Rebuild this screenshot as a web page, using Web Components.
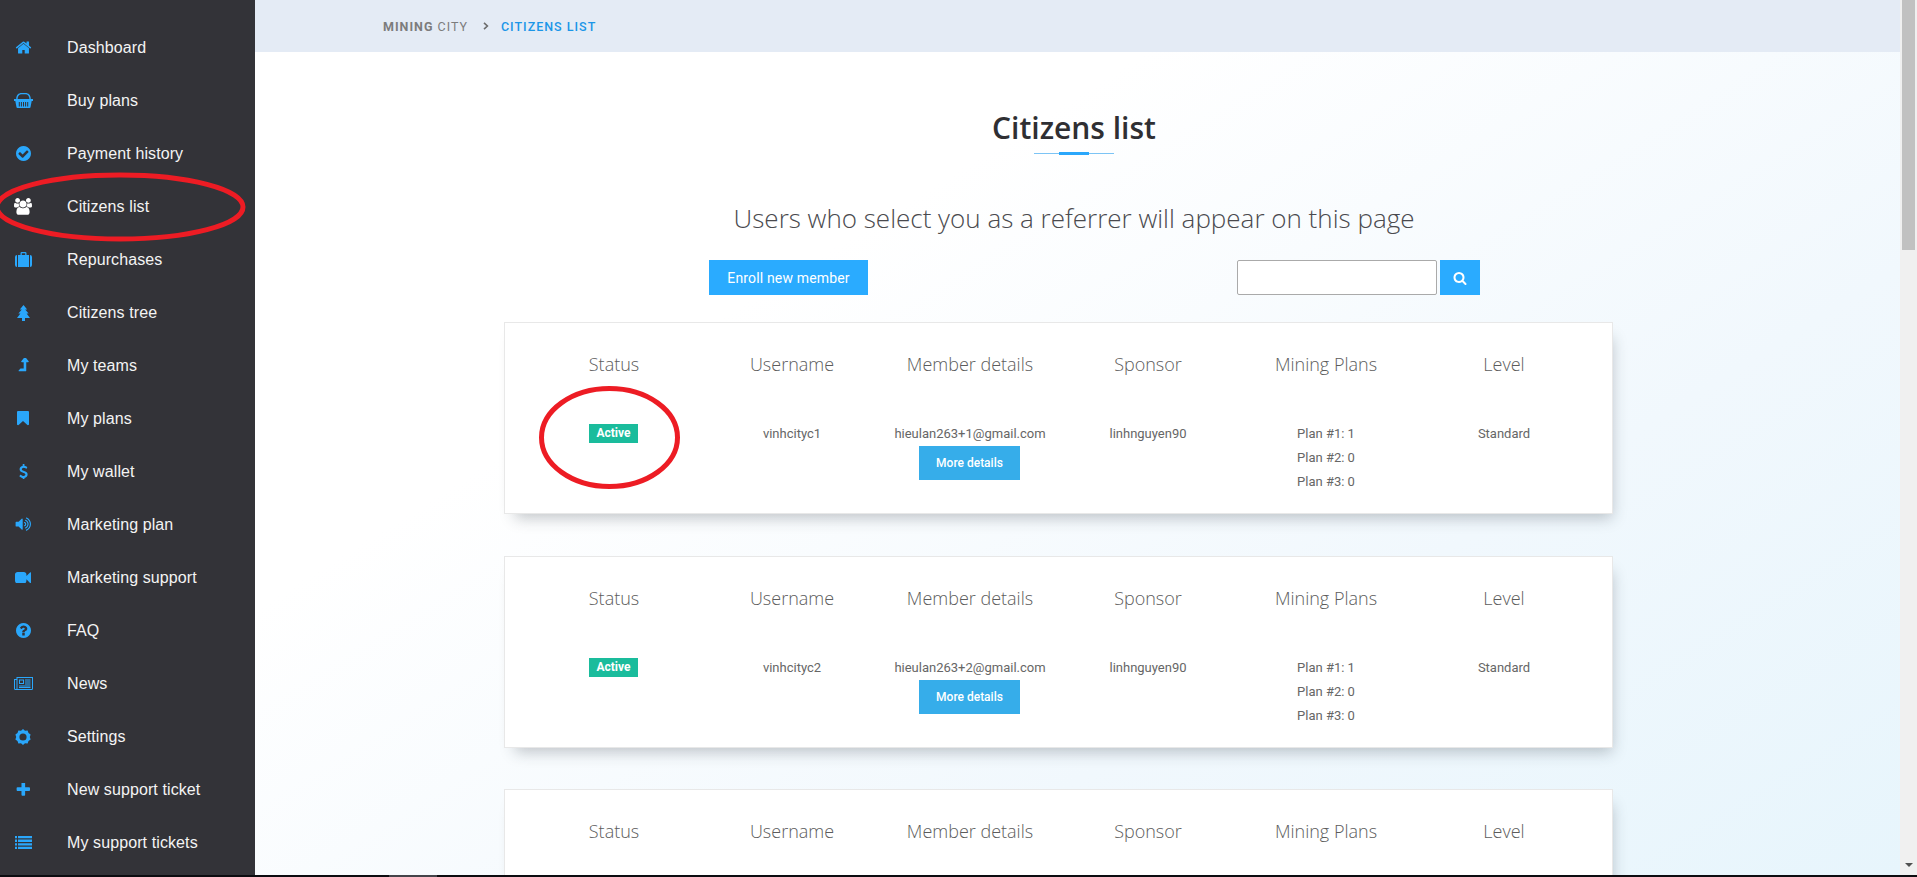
<!DOCTYPE html>
<html lang="en">
<head>
<meta charset="utf-8">
<title>Citizens list</title>
<style>
    html, body { margin: 0; height: 100%; overflow: hidden; background: #000; }
</style>
</head>
<body>
<app-shell>
    <side-nav slot="nav">
        <nav-item icon="home" w="17">Dashboard</nav-item>
        <nav-item icon="basket" w="19">Buy plans</nav-item>
        <nav-item icon="check" w="15">Payment history</nav-item>
        <nav-item icon="users" w="18" white>Citizens list</nav-item>
        <nav-item icon="suitcase" w="17">Repurchases</nav-item>
        <nav-item icon="tree" w="13">Citizens tree</nav-item>
        <nav-item icon="levelup" w="11">My teams</nav-item>
        <nav-item icon="bookmark" w="12">My plans</nav-item>
        <nav-item icon="dollar" w="9">My wallet</nav-item>
        <nav-item icon="volume" w="16">Marketing plan</nav-item>
        <nav-item icon="video" w="16">Marketing support</nav-item>
        <nav-item icon="question" w="15">FAQ</nav-item>
        <nav-item icon="news" w="19">News</nav-item>
        <nav-item icon="gear" w="16">Settings</nav-item>
        <nav-item icon="plus" w="14">New support ticket</nav-item>
        <nav-item icon="list" w="17">My support tickets</nav-item>
    </side-nav>

    <crumb-bar slot="top"></crumb-bar>
    <page-head></page-head>
    <search-row></search-row>
    <citizen-card username="vinhcityc1" email="hieulan263+1@gmail.com" sponsor="linhnguyen90" plans="1,0,0"></citizen-card>
    <citizen-card username="vinhcityc2" email="hieulan263+2@gmail.com" sponsor="linhnguyen90" plans="1,0,0"></citizen-card>
    <citizen-card username="vinhcityc3" email="hieulan263+3@gmail.com" sponsor="linhnguyen90" plans="1,0,0"></citizen-card>

    <ring-mark slot="marks" cx="120" cy="207" rx="123" ry="32"></ring-mark>
    <ring-mark slot="marks" cx="609.5" cy="437.5" rx="68" ry="49"></ring-mark>
</app-shell>

<script>
const ICONS = {
    home: ['0 0 1792 1792', '<path d="M1472 992v480q0 26-19 45t-45 19h-384v-384h-256v384h-384q-26 0-45-19t-19-45v-480q0-1 .5-3t.5-3l575-474 575 474q1 2 1 6zm223-69l-62 74q-8 9-21 11h-3q-13 0-21-7l-692-577-692 577q-12 8-24 7-13-2-21-11l-62-74q-8-10-7-23.5t11-21.5l719-599q32-26 76-26t76 26l244 204v-195q0-14 9-23t23-9h192q14 0 23 9t9 23v408l219 182q10 8 11 21.5t-7 23.5z"/>'],
    basket: ['0 0 19 15', '<path d="M0 6h19v2h-1.300L16.500 14.200a1 1 0 0 1-1 .8h-12a1 1 0 0 1-1-.8L1.300 8H0z"/><path d="M2.200 6C2.200 2 4.500 0 7.500 0h4c3 0 5.300 2 5.300 6h-1.400C15.400 3 13.700 1.300 11.500 1.300h-4C5.300 1.300 3.600 3 3.600 6z"/><path fill="#333338" d="M4.800 9h1v4.500h-1zM6.900 9h1v4.500h-1zM9 9h1v4.500H9zM11.100 9h1v4.500h-1zM13.200 9h1v4.500h-1z"/>'],
    check: ['128 128 1536 1536', '<path d="M1412 734q0-28-18-46l-91-90q-19-19-45-19t-45 19l-408 407-226-226q-19-19-45-19t-45 19l-91 90q-18 18-18 46 0 27 18 45l362 362q19 19 45 19 27 0 46-19l543-543q18-18 18-45zm252 162q0 209-103 385.5t-279.5 279.5-385.5 103-385.5-103-279.5-279.5-103-385.5 103-385.5 279.5-279.5 385.5-103 385.5 103 279.5 279.5 103 385.5z"/>'],
    users: ['0 0 1920 1792', '<path d="M593 896q-162 5-265 128h-134q-82 0-138-40.500t-56-118.500q0-353 124-353 6 0 43.500 21t97.500 42.500 119 21.500q67 0 133-23-5 37-5 66 0 139 81 256zm1071 637q0 120-73 189.500t-194 69.500h-874q-121 0-194-69.500t-73-189.500q0-53 3.500-103.500t14-109 26.500-108.500 43-97.500 62-81 85.500-53.500 111.500-20q10 0 43 21.500t73 48 107 48 135 21.500 135-21.500 107-48 73-48 43-21.500q61 0 111.500 20t85.500 53.500 62 81 43 97.500 26.500 108.500 14 109 3.500 103.500zm-1024-1277q0 106-75 181t-181 75-181-75-75-181 75-181 181-75 181 75 75 181zm704 384q0 159-112.500 271.500t-271.500 112.500-271.500-112.500-112.500-271.500 112.500-271.500 271.500-112.500 271.500 112.500 112.500 271.500zm576 225q0 78-56 118.500t-138 40.500h-134q-103-123-265-128 81-117 81-256 0-29-5-66 66 23 133 23 59 0 119-21.500t97.500-42.500 43.500-21q124 0 124 353zm-128-609q0 106-75 181t-181 75-181-75-75-181 75-181 181-75 181 75 75 181z"/>'],
    suitcase: ['0 0 17 15', '<path d="M3 3h11v12H3zM0 5a2 2 0 0 1 2-2v12a2 2 0 0 1-2-2zM15 3a2 2 0 0 1 2 2v8a2 2 0 0 1-2 2z"/><path d="M5.500 3V1.200Q5.500 0 6.700 0h3.600q1.200 0 1.200 1.200V3h-1.300V1.300H6.800V3z"/>'],
    tree: ['0 0 13 16', '<path d="M6.500 0L10.200 4.600H8.200L11.600 8.600H9.600L13 13H8V16H5V13H0L3.400 8.600H1.400L4.800 4.600H2.800z"/>'],
    levelup: ['320 128 1100 1536', '<path d="M1395 508q-18 39-58 39h-192v864q0 14-9 23t-23 9h-704q-21 0-29-18-8-20 4-35l160-192q9-11 25-11h320v-640h-192q-40 0-58-37-17-37 9-68l320-384q18-22 49-22t49 22l320 384q27 32 9 66z"/>'],
    bookmark: ['0 128 1280 1536', '<path d="M1164 128q23 0 44 9 33 13 52.500 41t19.500 62v1289q0 34-19.500 62t-52.500 41q-19 8-44 8-48 0-83-32l-441-424-441 424q-36 33-83 33-23 0-44-9-33-13-52.500-41t-19.500-62v-1289q0-34 19.500-62t52.500-41q21-9 44-9h1048z"/>'],
    dollar: ['0 0 1024 1792', '<path d="M978 1185q0 153-99.500 263.500t-258.500 136.500v175q0 14-9 23t-23 9h-135q-13 0-22.500-9.500t-9.500-22.500v-175q-66-9-127.500-31t-101.500-44.500-74-48-46.500-37.500-17.500-18q-17-21-2-41l103-135q7-10 23-12 15-2 24 9l2 2q113 99 243 125 37 8 74 8 81 0 142.500-43t61.500-122q0-28-15-53t-33.500-42-58.500-37.500-66-32-80-32.500q-39-16-61.500-25t-61.500-26.500-62.500-31-56.500-35.500-53.500-42.500-43.500-49-35.500-58-21-66.500-8.500-78q0-138 98-242t255-134v-180q0-13 9.500-22.500t22.500-9.500h135q14 0 23 9t9 23v176q57 6 110.500 23t87 33.500 63.500 37.500 39 29 15 14q17 18 5 38l-81 146q-8 15-23 16-14 3-27-7-3-3-14.500-12t-39-26.500-58.500-32-74.500-26-85.500-11.500q-95 0-155 43t-60 111q0 26 8.500 48t29.500 41.500 39.500 33 56 31 60.500 27 70 27.500q53 20 81 31.500t76 35 75.500 42.500 62 50 53 63.500 31.500 76.500 13 94z"/>'],
    volume: ['0 128 1728 1536', '<path d="M832 352v1088q0 26-19 45t-45 19-45-19l-333-333h-262q-26 0-45-19t-19-45v-384q0-26 19-45t45-19h262l333-333q19-19 45-19t45 19 19 45zm384 544q0 76-42.500 141.500t-112.500 93.500q-10 5-25 5-26 0-45-18.500t-19-45.500q0-21 12-35.500t29-25 34-23 29-35.500 12-57-12-57-29-35.500-34-23-29-25-12-35.500q0-27 19-45.500t45-18.500q15 0 25 5 70 27 112.500 93t42.500 142zm256 0q0 153-85 282.500t-225 188.500q-13 5-25 5-27 0-46-19t-19-45q0-39 39-59 56-29 76-44 74-54 115.500-135.500t41.500-173.500-41.500-173.500-115.500-135.500q-20-15-76-44-39-20-39-59 0-26 19-45t45-19q13 0 26 5 140 59 225 188.500t85 282.500zm256 0q0 230-127 422.500t-338 283.500q-13 5-26 5-26 0-45-19t-19-45q0-36 39-59 7-4 22.500-10.500t22.500-10.500q46-25 82-51 123-91 192-227t69-289-69-289-192-227q-36-26-82-51-7-4-22.500-10.500t-22.500-10.500q-39-23-39-59 0-26 19-45t45-19q13 0 26 5 211 91 338 283.500t127 422.500z"/>'],
    video: ['0 256 1792 1280', '<path d="M1792 352v1088q0 42-39 59-13 5-25 5-27 0-45-19l-403-403v166q0 119-84.500 203.500t-203.500 84.500h-704q-119 0-203.500-84.500t-84.500-203.500v-704q0-119 84.500-203.500t203.500-84.500h704q119 0 203.500 84.500t84.500 203.500v165l403-402q18-19 45-19 12 0 25 5 39 17 39 59z"/>'],
    question: ['128 128 1536 1536', '<path d="M1024 1376v-192q0-14-9-23t-23-9h-192q-14 0-23 9t-9 23v192q0 14 9 23t23 9h192q14 0 23-9t9-23zm256-672q0-88-55.500-163t-138.500-116-170-41q-243 0-371 213-15 24 8 42l132 100q7 6 19 6 16 0 25-12 53-68 86-92 34-24 86-24 48 0 85.500 26t37.500 59q0 38-20 61t-68 45q-63 28-115.500 86.500t-52.500 125.500v36q0 14 9 23t23 9h192q14 0 23-9t9-23q0-19 21.500-49.500t54.500-49.500q32-18 49-28.500t46-35 44.500-48 28-60.500 12.500-81zm384 192q0 209-103 385.500t-279.500 279.500-385.500 103-385.500-103-279.500-279.500-103-385.500 103-385.500 279.500-279.500 385.500-103 385.500 103 279.500 279.500 103 385.500z"/>'],
    news: ['0 0 19 13', '<path fill-rule="evenodd" d="M2.500 0H19v11.500q0 1.500-1.500 1.500H1.500Q0 13 0 11.500V2h2.500zM3.500 1v10.500q0 .6-.4 .6h14.400q.5 0 .5-.6V1zM1 3v8.500q0 .6.6.6h.5q.4 0 .4-.6V3z"/><path fill-rule="evenodd" d="M5 2.500h5v4.500H5zM6 3.500v2.500h3V3.500z"/><path d="M11 2.500h5.500v1H11zM11 4.500h5.500v1H11zM11 6.500h5.500v1H11zM5 8.500h11.500v1H5zM5 10h11.500v1H5z"/>'],
    gear: ['0 0 16 16', '<path fill-rule="evenodd" d="M8 0l2 1.700 2.600-.3.900 2.500 2.100 1.500-.8 2.600.8 2.600-2.100 1.500-.9 2.500-2.600-.3L8 16l-2-1.700-2.600.3-.9-2.500L.4 10.600 1.200 8 .4 5.400l2.100-1.500.9-2.500 2.600.3zM8 4.400a3.600 3.600 0 1 0 0 7.200 3.600 3.600 0 0 0 0-7.200z"/>'],
    plus: ['128 192 1472 1408', '<path d="M1600 736v192q0 40-28 68t-68 28h-416v416q0 40-28 68t-68 28h-192q-40 0-68-28t-28-68v-416h-416q-40 0-68-28t-28-68v-192q0-40 28-68t68-28h416v-416q0-40 28-68t68-28h192q40 0 68 28t28 68v416h416q40 0 68 28t28 68z"/>'],
    list: ['0 0 17 13', '<path d="M0 0h2v2.300H0zM3 0h14v2.300H3zM0 3.500h2v2.500H0zM3 3.500h14v2.500H3zM0 7.200h2v2.400H0zM3 7.200h14v2.400H3zM0 10.800h2v2.200H0zM3 10.800h14v2.200H3z"/>'],
    search: ['0 0 1792 1792', '<path d="M1216 832q0-185-131.500-316.500t-316.500-131.500-316.500 131.500-131.500 316.500 131.500 316.500 316.500 131.500 316.500-131.500 131.500-316.500zm512 832q0 52-38 90t-90 38q-54 0-90-38l-343-342q-179 124-399 124-143 0-273.500-55.500t-225-150-150-225-55.500-273.500 55.500-273.500 150-225 225-150 273.500-55.500 273.500 55.500 225 150 150 225 55.500 273.500q0 220-124 399l343 343q37 37 37 90z"/>']
};

function iconSvg(name, width) {
    const [box, body] = ICONS[name];
    return `<svg viewBox="${box}" width="${width}" fill="currentColor" style="display:block">${body}</svg>`;
}

class AppShell extends HTMLElement {
    constructor() {
        super();
        this.attachShadow({ mode: 'open' }).innerHTML = `
            <style>
                :host { display: block; position: relative; width: 1917px; height: 877px; overflow: hidden; }
                .frame { display: flex; height: 875px; overflow: hidden; }
                main {
                    flex: 1;
                    min-width: 0;
                    overflow: hidden;
                    background: linear-gradient(148deg, #fff 32%, #f1f8fd 68%, #e7f5fc 100%);
                }
                .strip { height: 2px; background: #0c0c10; position: relative; display: flex; padding-left: 389px; }
                .strip i { display: block; width: 48px; background: #44444a; }
            </style>
            <div class="frame">
                <slot name="nav"></slot>
                <main>
                    <slot name="top"></slot>
                    <slot></slot>
                </main>
                <fake-scrollbar></fake-scrollbar>
            </div>
            <div class="strip"><i></i></div>
            <slot name="marks"></slot>
        `;
    }
}

class SideNav extends HTMLElement {
    constructor() {
        super();
        this.attachShadow({ mode: 'open' }).innerHTML = `
            <style>
                :host {
                    display: block;
                    flex: none;
                    width: 255px;
                    background: #333338;
                    box-sizing: border-box;
                    padding-top: 21px;
                }
            </style>
            <slot></slot>
        `;
    }
}

class NavItem extends HTMLElement {
    constructor() {
        super();
        this._shadow = this.attachShadow({ mode: 'open' });
    }
    connectedCallback() {
        const colour = this.hasAttribute('white') ? '#fff' : '#2aa7fb';
        this._shadow.innerHTML = `
            <style>
                :host {
                    display: flex;
                    align-items: center;
                    height: 53px;
                    font: 16px "Liberation Sans", Arial, sans-serif;
                    letter-spacing: .1px;
                    color: #f4f4f4;
                }
                .ico { width: 46px; margin-right: 21px; display: flex; justify-content: center; color: ${colour}; }
            </style>
            <span class="ico">${iconSvg(this.getAttribute('icon'), this.getAttribute('w'))}</span>
            <slot></slot>
        `;
    }
}

class CrumbBar extends HTMLElement {
    constructor() {
        super();
        this.attachShadow({ mode: 'open' }).innerHTML = `
            <style>
                :host {
                    display: flex;
                    align-items: center;
                    height: 52px;
                    padding-left: 128px;
                    background: #e4ebf5;
                    font: 12.500px Roboto, sans-serif;
                    letter-spacing: 1px;
                    color: #7c7c7c;
                    text-transform: uppercase;
                }
                b { font-weight: 700; }
                svg { margin: 0 12px 0 15px; }
                .now { color: #1b96e8; font-weight: 500; }
            </style>
            <span><b>Mining</b> City</span>
            <svg width="6" height="8" viewBox="0 0 6 8" fill="none" stroke="#6c6c6c" stroke-width="1.600"><path d="M1 .8L4.400 4 1 7.200"/></svg>
            <span class="now">Citizens list</span>
        `;
    }
}

class PageHead extends HTMLElement {
    constructor() {
        super();
        this.attachShadow({ mode: 'open' }).innerHTML = `
            <style>
                :host { display: block; width: 1638px; text-align: center; font-family: "Open Sans", sans-serif; color: #2f2f33; }
                h1 { margin: 0; padding-top: 54px; font-size: 30px; line-height: 44px; font-weight: 600; }
                .rule { position: relative; width: 80px; height: 1px; background: #7cc4f5; margin: 3px auto 0; }
                .rule i { position: absolute; left: 25px; top: -1px; width: 30px; height: 3px; background: #2aa7fb; }
                p { margin: 46px 0 0; font-size: 26px; line-height: 36px; font-weight: 300; color: #4a4a4e; }
            </style>
            <h1>Citizens list</h1>
            <div class="rule"><i></i></div>
            <p>Users who select you as a referrer will appear on this page</p>
        `;
    }
}

class SearchRow extends HTMLElement {
    constructor() {
        super();
        this.attachShadow({ mode: 'open' }).innerHTML = `
            <style>
                :host {
                    display: flex;
                    justify-content: space-between;
                    width: 771px;
                    margin: 24px 0 0 454px;
                    font: 14px Roboto, sans-serif;
                    letter-spacing: .15px;
                }
                button { height: 35px; border: 0; padding: 0; background: #2aabff; color: #fff; font: inherit; letter-spacing: inherit; }
                .enroll { width: 159px; }
                .group { display: flex; gap: 3px; }
                input { width: 200px; height: 35px; box-sizing: border-box; border: 1px solid #aaa; border-radius: 2px; background: #fff; }
                .go { width: 40px; display: flex; align-items: center; justify-content: center; }
            </style>
            <button class="enroll">Enroll new member</button>
            <div class="group">
                <input type="text">
                <button class="go">${iconSvg('search', 14)}</button>
            </div>
        `;
    }
}

class CitizenCard extends HTMLElement {
    constructor() {
        super();
        this._shadow = this.attachShadow({ mode: 'open' });
    }
    connectedCallback() {
        const planes = this.getAttribute('plans').split(',');
        this._shadow.innerHTML = `
            <style>
                :host {
                    display: block;
                    box-sizing: border-box;
                    width: 1109px;
                    height: 192px;
                    margin: 27px 0 41.600px 249px;
                    padding: 29px 19px 0 20px;
                    background: #fff;
                    border: 1px solid #e8e8e8;
                    box-shadow: 5px 10px 14px -6px rgba(40, 50, 60, .28);
                }
                .grid {
                    display: grid;
                    grid-template-columns: repeat(6, 178px);
                    text-align: center;
                    font: 13px/24px Roboto, sans-serif;
                    color: #666;
                }
                .th { font: 300 18px/25px "Open Sans", sans-serif; color: #5c5c5c; margin-bottom: 45px; }
                .tag {
                    display: inline-block;
                    width: 49px;
                    height: 19px;
                    margin: 2px 0 0 -1px;
                    vertical-align: top;
                    background: #1abc9c;
                    color: #fff;
                    font: 700 12px/19px Roboto, sans-serif;
                }
                button {
                    display: block;
                    width: 101px;
                    height: 34px;
                    margin: 0 0 0 38px;
                    padding: 0;
                    border: 0;
                    background: #36adea;
                    color: #fff;
                    font: 500 12px Roboto, sans-serif;
                }
            </style>
            <div class="grid">
                <div class="th">Status</div>
                <div class="th">Username</div>
                <div class="th">Member details</div>
                <div class="th">Sponsor</div>
                <div class="th">Mining Plans</div>
                <div class="th">Level</div>
                <div><span class="tag">Active</span></div>
                <div>${this.getAttribute('username')}</div>
                <div>${this.getAttribute('email')}<button>More details</button></div>
                <div>${this.getAttribute('sponsor')}</div>
                <div>${planes.map((p, i) => `<div>Plan #${i + 1}: ${p}</div>`).join('')}</div>
                <div>Standard</div>
            </div>
        `;
    }
}

class FakeScrollbar extends HTMLElement {
    constructor() {
        super();
        this.attachShadow({ mode: 'open' }).innerHTML = `
            <style>
                :host { display: block; flex: none; width: 17px; background: #f0f0f0; position: relative; }
                .thumb { width: 13px; height: 250px; margin-left: 2px; background: #c1c1c1; }
                .down {
                    position: absolute;
                    left: 5px;
                    bottom: 8px;
                    border: 4px solid transparent;
                    border-top: 4px solid #505050;
                    border-bottom: 0;
                }
            </style>
            <div class="thumb"></div>
            <div class="down"></div>
        `;
    }
}

// hand drawn red rings over the screenshot
class RingMark extends HTMLElement {
    constructor() {
        super();
        this._shadow = this.attachShadow({ mode: 'open' });
    }
    connectedCallback() {
        const a = n => this.getAttribute(n);
        this._shadow.innerHTML = `
            <style>
                :host { position: absolute; left: 0; top: 0; pointer-events: none; }
                svg { display: block; }
            </style>
            <svg width="1917" height="877">
                <ellipse cx="${a('cx')}" cy="${a('cy')}" rx="${a('rx')}" ry="${a('ry')}" fill="none" stroke="#ed1c24" stroke-width="5"/>
            </svg>
        `;
    }
}

customElements.define('app-shell', AppShell);
customElements.define('side-nav', SideNav);
customElements.define('nav-item', NavItem);
customElements.define('crumb-bar', CrumbBar);
customElements.define('page-head', PageHead);
customElements.define('search-row', SearchRow);
customElements.define('citizen-card', CitizenCard);
customElements.define('fake-scrollbar', FakeScrollbar);
customElements.define('ring-mark', RingMark);
</script>
</body>
</html>
